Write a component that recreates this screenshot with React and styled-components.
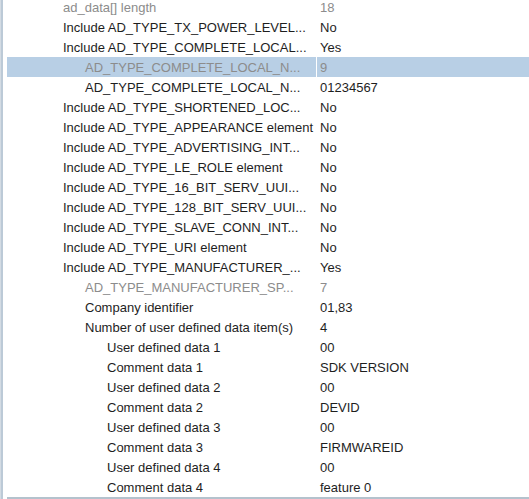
import React from "react";
import styled, { createGlobalStyle } from "styled-components";

const GlobalStyle = createGlobalStyle`
  html, body {
    margin: 0;
    padding: 0;
    background: #ffffff;
  }
  body {
    font-family: "Liberation Sans", Arial, sans-serif;
    overflow: hidden;
  }
`;

const Frame = styled.div`
  width: 529px;
  height: 499px;
  display: flex;
  overflow: hidden;
  background: #ffffff;
`;

const SideBar = styled.div`
  width: 3px;
  flex-shrink: 0;
  background: linear-gradient(to right, #d3dbe3 0, #d3dbe3 1px, #bccad7 1px, #bccad7 3px);
`;

const Gutter = styled.div`
  width: 4px;
  flex-shrink: 0;
`;

const Table = styled.div`
  flex: 1;
  display: flex;
  flex-direction: column;
  margin-top: -3px;
`;

const Rows = styled.div`
  display: flex;
  flex-direction: column;
  border-bottom: 2px solid #b4c2cd;
`;

const Row = styled.div`
  height: 20px;
  display: grid;
  grid-template-columns: 309px 1px 1fr;
  font-size: 13px;
  line-height: 21px;
  color: ${(p) => (p.$dim ? "#8c8c8c" : "#1e1e1e")};
`;

const LabelCell = styled.div`
  background: ${(p) => (p.$selected ? "#b8cfe5" : "transparent")};
  padding-left: ${(p) => 56 + p.$level * 22}px;
  white-space: nowrap;
  overflow: hidden;
`;

const Divider = styled.div`
  background: #ffffff;
`;

const ValueCell = styled.div`
  background: ${(p) => (p.$selected ? "#b8cfe5" : "transparent")};
  padding-left: 3px;
  white-space: nowrap;
  overflow: hidden;
`;

const rows = [
  { label: "ad_data[] length", value: "18", level: 0, dim: true },
  { label: "Include AD_TYPE_TX_POWER_LEVEL...", value: "No", level: 0 },
  { label: "Include AD_TYPE_COMPLETE_LOCAL...", value: "Yes", level: 0 },
  { label: "AD_TYPE_COMPLETE_LOCAL_N...", value: "9", level: 1, dim: true, selected: true },
  { label: "AD_TYPE_COMPLETE_LOCAL_N...", value: "01234567", level: 1 },
  { label: "Include AD_TYPE_SHORTENED_LOC...", value: "No", level: 0 },
  { label: "Include AD_TYPE_APPEARANCE element", value: "No", level: 0 },
  { label: "Include AD_TYPE_ADVERTISING_INT...", value: "No", level: 0 },
  { label: "Include AD_TYPE_LE_ROLE element", value: "No", level: 0 },
  { label: "Include AD_TYPE_16_BIT_SERV_UUI...", value: "No", level: 0 },
  { label: "Include AD_TYPE_128_BIT_SERV_UUI...", value: "No", level: 0 },
  { label: "Include AD_TYPE_SLAVE_CONN_INT...", value: "No", level: 0 },
  { label: "Include AD_TYPE_URI element", value: "No", level: 0 },
  { label: "Include AD_TYPE_MANUFACTURER_...", value: "Yes", level: 0 },
  { label: "AD_TYPE_MANUFACTURER_SP...", value: "7", level: 1, dim: true },
  { label: "Company identifier", value: "01,83", level: 1 },
  { label: "Number of user defined data item(s)", value: "4", level: 1 },
  { label: "User defined data 1", value: "00", level: 2 },
  { label: "Comment data 1", value: "SDK VERSION", level: 2 },
  { label: "User defined data 2", value: "00", level: 2 },
  { label: "Comment data 2", value: "DEVID", level: 2 },
  { label: "User defined data 3", value: "00", level: 2 },
  { label: "Comment data 3", value: "FIRMWAREID", level: 2 },
  { label: "User defined data 4", value: "00", level: 2 },
  { label: "Comment data 4", value: "feature 0", level: 2 },
];

export default function App() {
  return (
    <>
      <GlobalStyle />
      <Frame>
        <SideBar />
        <Gutter />
        <Table>
          <Rows>
            {rows.map((r, i) => (
              <Row key={i} $dim={r.dim}>
                <LabelCell $level={r.level} $selected={r.selected}>
                  {r.label}
                </LabelCell>
                <Divider />
                <ValueCell $selected={r.selected}>{r.value}</ValueCell>
              </Row>
            ))}
          </Rows>
        </Table>
      </Frame>
    </>
  );
}
